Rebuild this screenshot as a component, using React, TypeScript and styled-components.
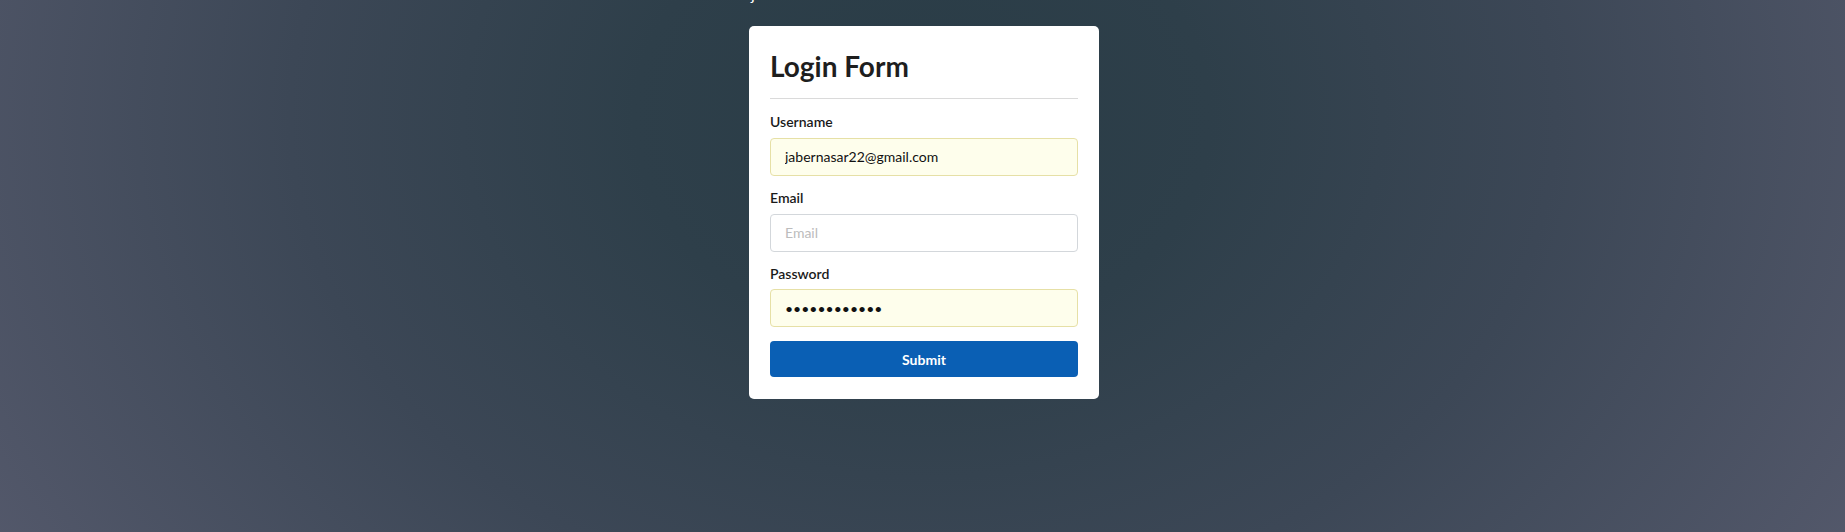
import React from 'react'
import styled, { createGlobalStyle } from 'styled-components'

const GlobalStyle = createGlobalStyle`
    html, body {
        margin: 0;
        padding: 0;
    }
    body {
        font-family: Lato, "Open Sans", "Liberation Sans", sans-serif;
        background: #2b3d47;
    }
`

const Page = styled.div`
    min-height: 100vh;
    display: flex;
    flex-direction: column;
    align-items: center;
    background: radial-gradient(ellipse 1150px 900px at 50% 22%, #293c46 0%, #2e3f4a 25%, #3c4756 55%, #575b6e 100%);
    overflow: hidden;
`

const Column = styled.div`
    width: 350px;
    margin-left: 3px;
`

const Greeting = styled.p`
    margin: -17px 0 21px 2px;
    color: #ffffff;
    font-size: 16px;
    line-height: 22px;
`

const Card = styled.form`
    box-sizing: border-box;
    width: 350px;
    padding: 23px 21px 22px;
    background: #ffffff;
    border-radius: 5px;
    display: flex;
    flex-direction: column;
`

const Title = styled.h2`
    margin: 0 0 15px;
    padding-bottom: 15px;
    border-bottom: 1px solid #dadada;
    font-size: 28px;
    line-height: 34px;
    font-weight: 700;
    color: #1e1e1e;
`

const Fields = styled.div`
    display: flex;
    flex-direction: column;
    gap: 14px;
`

const Field = styled.div`
    display: flex;
    flex-direction: column;
`

const Label = styled.label`
    margin-bottom: 7px;
    font-size: 14px;
    line-height: 16.8px;
    font-weight: 600;
    color: #1a1a1a;
`

const Input = styled.input<{ filled?: boolean }>`
    box-sizing: border-box;
    height: 38px;
    width: 100%;
    padding: 0 14px;
    border: 1px solid ${props => props.filled ? '#e6e0a6' : '#d3d7db'};
    border-radius: 4px;
    background: ${props => props.filled ? '#fefeec' : '#ffffff'};
    font-family: inherit;
    font-size: 14px;
    color: #111111;
    outline: none;
    &::placeholder {
        color: #bcbcbc;
    }
`

const SubmitButton = styled.button`
    height: 36px;
    margin-top: 14px;
    border: none;
    border-radius: 4px;
    background: #0a5fb4;
    color: #ffffff;
    font-family: inherit;
    font-size: 14px;
    font-weight: 700;
    cursor: pointer;
`

export default function App() {
    return (
        <Page>
            <GlobalStyle />
            <Column>
                <Greeting>jaber</Greeting>
                <Card onSubmit={(e) => e.preventDefault()}>
                    <Title>Login Form</Title>
                    <Fields>
                        <Field>
                            <Label htmlFor='username'>Username</Label>
                            <Input id='username' filled defaultValue='jabernasar22@gmail.com' />
                        </Field>
                        <Field>
                            <Label htmlFor='email'>Email</Label>
                            <Input id='email' placeholder='Email' />
                        </Field>
                        <Field>
                            <Label htmlFor='password'>Password</Label>
                            <Input id='password' type='password' filled defaultValue='jaber1234567' />
                        </Field>
                    </Fields>
                    <SubmitButton type='submit'>Submit</SubmitButton>
                </Card>
            </Column>
        </Page>
    )
}
